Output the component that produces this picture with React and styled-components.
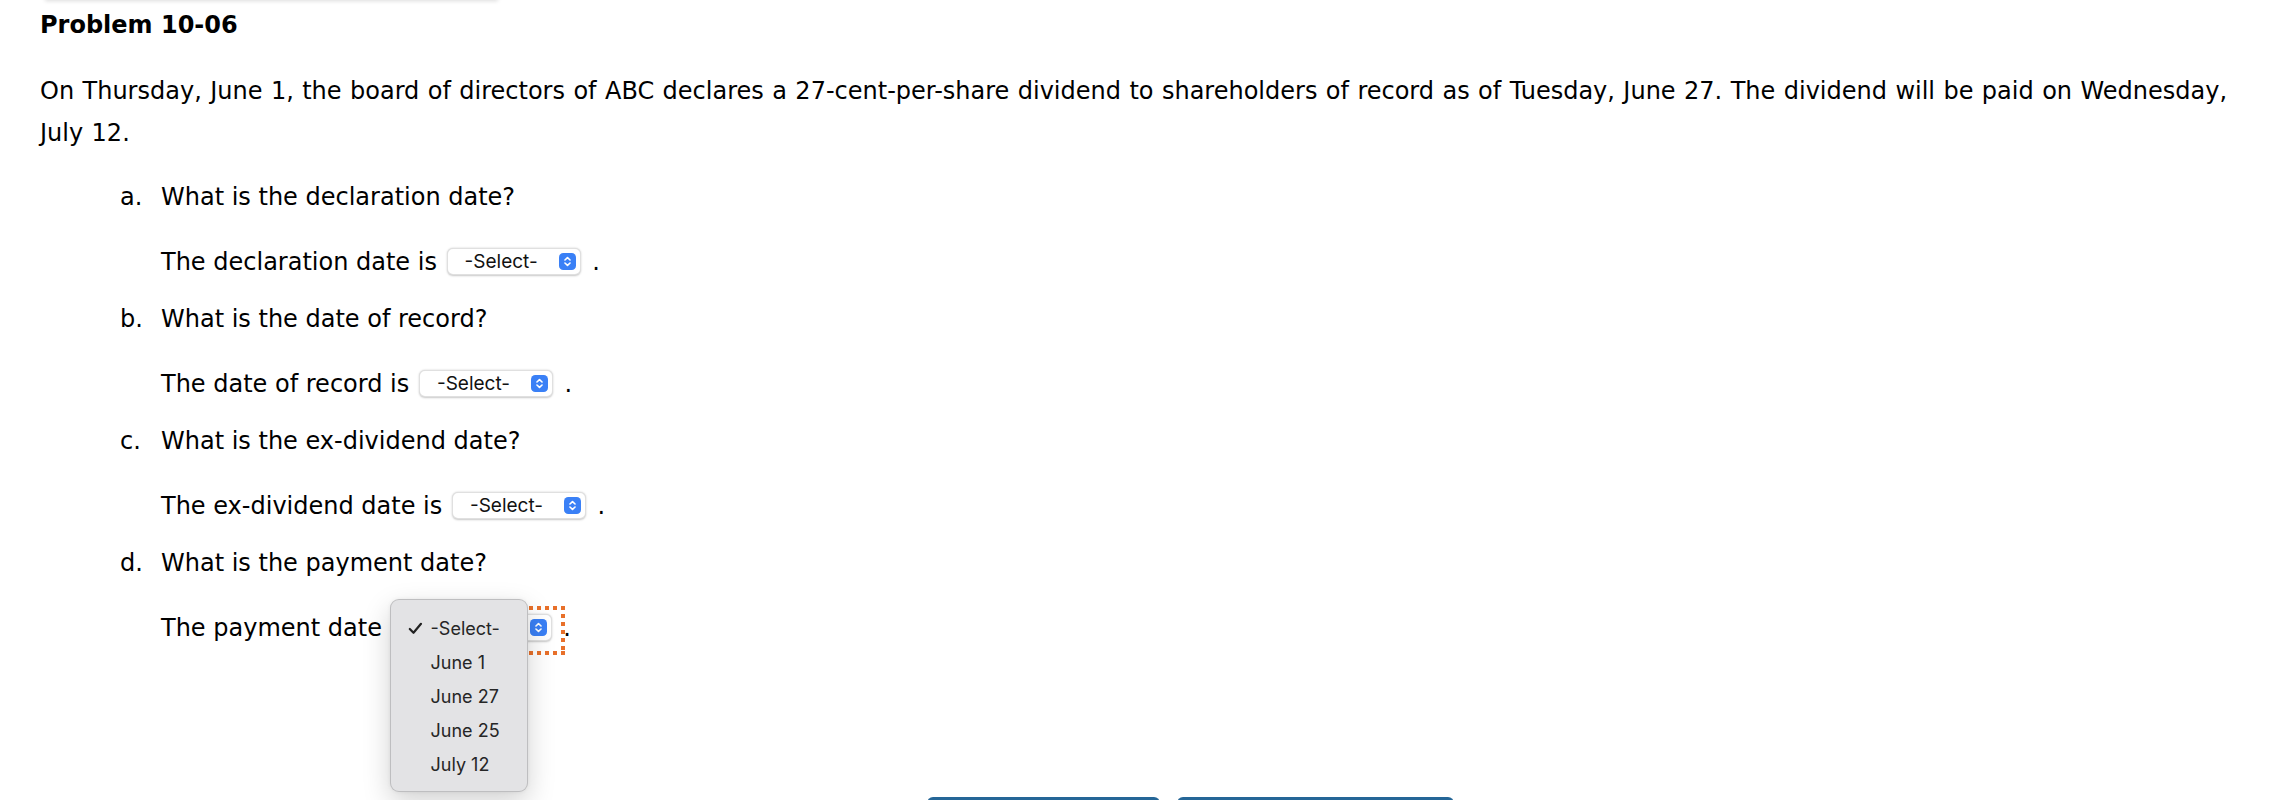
import React from 'react';
import styled, { createGlobalStyle } from 'styled-components';

const GlobalStyle = createGlobalStyle`
  html, body {
    margin: 0;
    padding: 0;
    background: #ffffff;
  }
  body {
    font-family: "DejaVu Sans", Verdana, sans-serif;
    color: #000;
    overflow: hidden;
  }
`;

const questions = [
  { key: 'a', question: 'What is the declaration date?', answer: 'The declaration date is' },
  { key: 'b', question: 'What is the date of record?', answer: 'The date of record is' },
  { key: 'c', question: 'What is the ex-dividend date?', answer: 'The ex-dividend date is' },
  { key: 'd', question: 'What is the payment date?', answer: 'The payment date', open: true, width: 160 },
];

const options = ['-Select-', 'June 1', 'June 27', 'June 25', 'July 12'];

const StepperIcon = () => (
  <svg width="17" height="17" viewBox="0 0 16 16">
    <rect x="0" y="0" width="16" height="16" rx="4" fill="#3a80f6" />
    <path d="M5.6 6.6 L8 4.3 L10.4 6.6" fill="none" stroke="#fff" strokeWidth="1.5" strokeLinecap="round" strokeLinejoin="round" />
    <path d="M5.6 9.4 L8 11.7 L10.4 9.4" fill="none" stroke="#fff" strokeWidth="1.5" strokeLinecap="round" strokeLinejoin="round" />
  </svg>
);

const CheckIcon = () => (
  <svg width="15" height="15" viewBox="0 0 15 15">
    <path d="M1.8 8 L5.5 11.8 L13 2.8" fill="none" stroke="#222" strokeWidth="2.2" strokeLinecap="round" strokeLinejoin="round" />
  </svg>
);

const SelectBox = ({ open, width = 134 }) => (
  <SelectWrap $focused={open}>
    <SelectButton $width={width}>
      <SelectText>-Select-</SelectText>
      <StepperIcon />
    </SelectButton>
    {open && (
      <Menu>
        {options.map((opt, i) => (
          <MenuItem key={opt}>
            <CheckSlot>{i === 0 && <CheckIcon />}</CheckSlot>
            {opt}
          </MenuItem>
        ))}
      </Menu>
    )}
  </SelectWrap>
);

const App = () => {
  return (
    <>
      <GlobalStyle />
      <HeaderShadow />
      <Page>
        <Title>Problem 10-06</Title>
        <Paragraph>
          On Thursday, June 1, the board of directors of ABC declares a 27-cent-per-share dividend to
          shareholders of record as of Tuesday, June 27. The dividend will be paid on Wednesday, July 12.
        </Paragraph>
        <QuestionList>
          {questions.map((q) => (
            <QuestionItem key={q.key}>
              <Marker>{q.key}.</Marker>
              <QuestionText>{q.question}</QuestionText>
              <AnswerRow>
                {q.answer} <SelectBox open={q.open} width={q.width} />{' '}.
              </AnswerRow>
            </QuestionItem>
          ))}
        </QuestionList>
        <ButtonRow>
          <ActionButton $width={233} />
          <ActionButton $width={277} />
        </ButtonRow>
      </Page>
    </>
  );
};

const HeaderShadow = styled.div`
  width: 453px;
  height: 10px;
  margin: -10px 0 0 45px;
  background: #fff;
  box-shadow: 0 1px 4px rgba(0, 0, 0, 0.14);
`;

const Page = styled.div`
  padding: 7px 40px 0 40px;
`;

const Title = styled.div`
  font-weight: bold;
  font-size: 24px;
  line-height: 36px;
`;

const Paragraph = styled.p`
  margin: 27px 0 0 0;
  font-size: 24px;
  line-height: 42px;
  word-spacing: 0.8px;
`;

const QuestionList = styled.div`
  margin-top: 22px;
  padding-left: 80px;
  display: flex;
  flex-direction: column;
  gap: 15px;
`;

const QuestionItem = styled.div`
  display: grid;
  grid-template-columns: 41px 1fr;
  row-gap: 23px;
  font-size: 24px;
  line-height: 42px;
`;

const Marker = styled.span``;

const QuestionText = styled.span``;

const AnswerRow = styled.div`
  grid-column: 2;
  white-space: nowrap;
`;

const SelectWrap = styled.span`
  position: relative;
  display: inline-block;
  vertical-align: middle;
  margin: -4px 4px 0 2px;

  ${({ $focused }) =>
    $focused &&
    `
    &::after {
      content: "";
      position: absolute;
      top: -8px;
      bottom: -14px;
      left: 20px;
      right: -13px;
      pointer-events: none;
      background:
        linear-gradient(90deg, transparent 50%, #e8702a 50%) top right / 8px 4px repeat-x,
        linear-gradient(90deg, transparent 50%, #e8702a 50%) bottom right / 8px 4px repeat-x,
        linear-gradient(180deg, #e8702a 50%, transparent 50%) top right / 4px 8px repeat-y;
    }
  `}
`;

const SelectButton = styled.span`
  display: flex;
  align-items: center;
  justify-content: space-between;
  box-sizing: border-box;
  width: ${({ $width }) => $width}px;
  height: 27px;
  padding: 0 4px 0 17px;
  background: #fff;
  border-radius: 6px;
  border: 0.5px solid rgba(0, 0, 0, 0.12);
  box-shadow: 0 0.5px 2px rgba(0, 0, 0, 0.22);

  svg {
    display: block;
  }
`;

const SelectText = styled.span`
  font-family: Inter, "Liberation Sans", sans-serif;
  font-size: 19px;
  line-height: 27px;
  color: #111;
`;

const Menu = styled.div`
  position: absolute;
  top: -15px;
  left: -2px;
  z-index: 5;
  box-sizing: border-box;
  width: 138px;
  padding: 12px 0 9px;
  background: #e3e3e5;
  border: 1px solid rgba(0, 0, 0, 0.16);
  border-radius: 9px;
  box-shadow: 0 10px 28px rgba(0, 0, 0, 0.18), 0 0 4px rgba(0, 0, 0, 0.06);
`;

const MenuItem = styled.div`
  display: flex;
  align-items: center;
  height: 34px;
  font-family: Inter, "Liberation Sans", sans-serif;
  font-size: 18px;
  color: #262626;
`;

const CheckSlot = styled.span`
  width: 40px;
  padding-left: 17px;
  box-sizing: border-box;
  display: flex;
  align-items: center;
`;

const ButtonRow = styled.div`
  display: flex;
  gap: 17px;
  margin-top: 148px;
  padding-left: 887px;
`;

const ActionButton = styled.div`
  width: ${({ $width }) => $width}px;
  height: 46px;
  border-radius: 6px;
  background: #256697;
`;

export default App;
